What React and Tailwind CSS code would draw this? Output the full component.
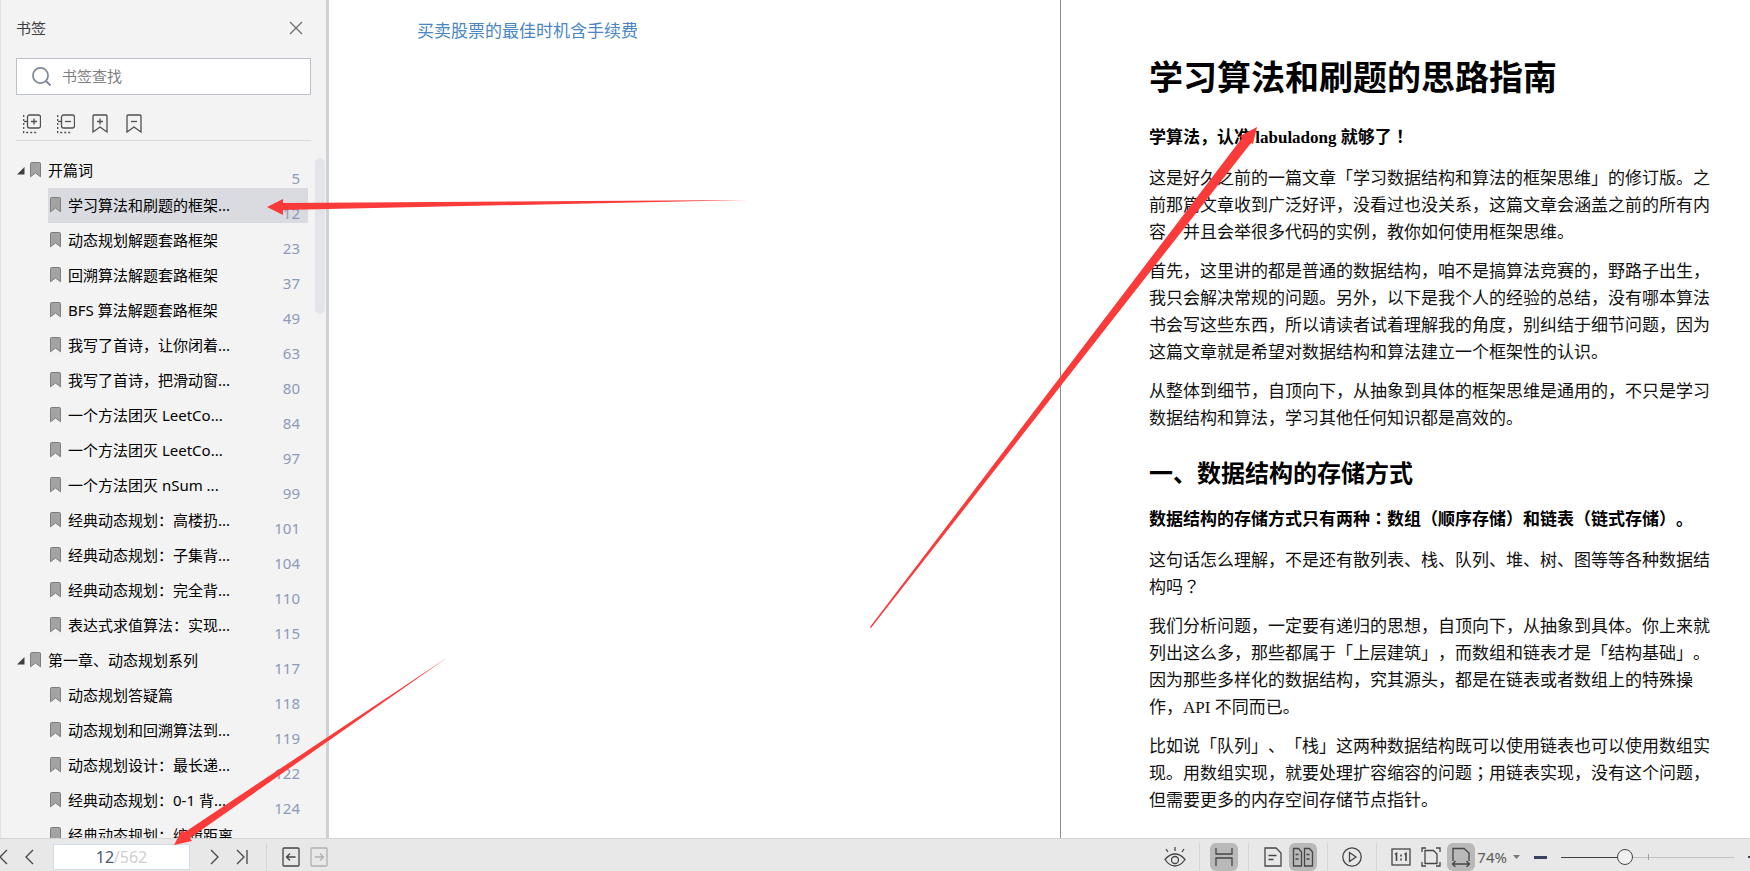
import { useState } from "react";

const bookmarks = [
  { title: "开篇词", page: 5, chapter: true },
  { title: "学习算法和刷题的框架...", page: 12 },
  { title: "动态规划解题套路框架", page: 23 },
  { title: "回溯算法解题套路框架", page: 37 },
  { title: "BFS 算法解题套路框架", page: 49 },
  { title: "我写了首诗，让你闭着...", page: 63 },
  { title: "我写了首诗，把滑动窗...", page: 80 },
  { title: "一个方法团灭 LeetCo...", page: 84 },
  { title: "一个方法团灭 LeetCo...", page: 97 },
  { title: "一个方法团灭 nSum ...", page: 99 },
  { title: "经典动态规划：高楼扔...", page: 101 },
  { title: "经典动态规划：子集背...", page: 104 },
  { title: "经典动态规划：完全背...", page: 110 },
  { title: "表达式求值算法：实现...", page: 115 },
  { title: "第一章、动态规划系列", page: 117, chapter: true },
  { title: "动态规划答疑篇", page: 118 },
  { title: "动态规划和回溯算法到...", page: 119 },
  { title: "动态规划设计：最长递...", page: 122 },
  { title: "经典动态规划：0-1 背...", page: 124 },
  { title: "经典动态规划：编辑距离", page: null },
];

function Icon({ w = 20, h = 20, children, className = "" }) {
  return (
    <svg
      width={w}
      height={h}
      viewBox={`0 0 ${w} ${h}`}
      fill="none"
      stroke="currentColor"
      strokeWidth="1.3"
      className={`shrink-0 ${className}`}
      aria-hidden="true"
    >
      {children}
    </svg>
  );
}

function BookmarkGlyph() {
  return (
    <svg width="11" height="16" viewBox="0 0 11 16" className="shrink-0" aria-hidden="true">
      <path d="M.5 1.5q0-1 1-1h8q1 0 1 1v13.3L5.5 11 .5 14.8z" fill="#a3a3a3" stroke="#7e7e7e" />
    </svg>
  );
}

function BookmarkRow({ item, selected, onSelect }) {
  return (
    <li className={item.chapter ? "pl-3.5" : "pl-[47px]"}>
      <button
        onClick={onSelect}
        className={`flex h-[35px] w-full items-center pr-2 pb-0.5 text-left ${selected ? "bg-[#d9dbe0]" : ""}`}
      >
        {item.chapter && (
          <svg width="10" height="8" viewBox="0 0 10 8" className="mt-0.5 mr-1 ml-px shrink-0" aria-hidden="true">
            <path d="M8.5 0v7.5H1z" fill="#404040" />
          </svg>
        )}
        <span className={item.chapter ? "mr-[7px]" : "mr-[7px] ml-0.5"}>
          <BookmarkGlyph />
        </span>
        <span className="flex-1 whitespace-nowrap text-[15px] leading-5 text-black">{item.title}</span>
        <span className="pt-4 text-[15px] leading-5 text-[#8d9ab8]">{item.page}</span>
      </button>
    </li>
  );
}

function Sidebar() {
  const [selected, setSelected] = useState(1);

  return (
    <aside className="flex w-[329px] shrink-0 flex-col border-r-3 border-l border-r-[#cfd0d5] border-l-[#e2e2e2] bg-[#f3f3f3]">
      <div className="flex h-[58px] shrink-0 items-center justify-between pr-[23px] pb-0.5 pl-[15px]">
        <h2 className="text-[15px] text-[#3c3c3c]">书签</h2>
        <button aria-label="关闭" className="text-[#6d6d6d]">
          <Icon w={14} h={14}>
            <path d="M1 1l12 12M13 1L1 13" />
          </Icon>
        </button>
      </div>
      <div className="shrink-0 px-[15px]">
        <label className="flex h-[37px] items-center border border-[#bcc0ca] bg-white pl-[15px]">
          <Icon className="text-[#7e889d]">
            <circle cx="8.5" cy="8.5" r="7.6" strokeWidth="1.7" />
            <path d="M14 14l4.5 4.5" strokeWidth="2" />
          </Icon>
          <input
            aria-label="书签查找"
            placeholder="书签查找"
            className="ml-2.5 min-w-0 flex-1 bg-transparent text-[15px] outline-none placeholder:text-[#7f7f7f]"
          />
        </label>
        <div className="flex h-[46px] items-center gap-4 border-b border-[#dadada] pt-3 pl-[7px] text-[#505050]">
          <button aria-label="展开">
            <Icon w={18} h={20}>
              <rect x="4.5" y="1" width="13" height="13" rx="2" />
              <path d="M11 4.5v6M8 7.5h6" />
              <path d="M.7 1v17.5H14" strokeDasharray="2 2" />
              <path d="M1 7.5h3.5" />
            </Icon>
          </button>
          <button aria-label="收起">
            <Icon w={18} h={20}>
              <rect x="4.5" y="1" width="13" height="13" rx="2" />
              <path d="M8 7.5h6" />
              <path d="M.7 1v17.5H14" strokeDasharray="2 2" />
              <path d="M1 7.5h3.5" />
            </Icon>
          </button>
          <button aria-label="添加书签">
            <Icon w={18} h={20}>
              <path d="M2 18V2q0-1 1-1h12q1 0 1 1v16l-7-5z" />
              <path d="M9 4.5v6M6 7.5h6" />
            </Icon>
          </button>
          <button aria-label="删除书签">
            <Icon w={18} h={20}>
              <path d="M2 18V2q0-1 1-1h12q1 0 1 1v16l-7-5z" />
              <path d="M6 7.5h6" />
            </Icon>
          </button>
        </div>
      </div>
      <div className="flex min-h-0 flex-1 overflow-hidden pt-3">
        <ul className="min-w-0 flex-1">
          {bookmarks.map((item, i) => (
            <BookmarkRow key={i} item={item} selected={i === selected} onSelect={() => setSelected(i)} />
          ))}
        </ul>
        <div className="mt-[5px] mr-px ml-[7px] h-[156px] w-2.5 rounded-full bg-[#e4e5e8]" />
      </div>
    </aside>
  );
}

// These marks sit in the middle of their square, as in the printed book
function Prose({ children }) {
  return children.split(/([：；！？])/).map((part, i) =>
    i % 2 ? (
      <span key={i} className="font-['Noto_Sans_CJK_JP',sans-serif] leading-none">
        {part}
      </span>
    ) : (
      part
    )
  );
}

function Paragraph({ children, bold }) {
  return (
    <p className={`text-[17px] leading-[27px] ${bold ? "mb-3.5 font-bold text-black" : "mb-3 text-[#111]"}`}>
      <Prose>{children}</Prose>
    </p>
  );
}

function Document() {
  return (
    <main className="flex min-w-0 flex-1 bg-white font-['Liberation_Serif','Noto_Sans_CJK_SC',serif] [text-spacing-trim:space-all]">
      <section className="w-[732px] shrink-0 border-r border-[#8c8c8c] pt-[18px] pl-[88px]">
        <a href="#fee" className="text-[17px] leading-[27px] text-[#4a86c5]">
          买卖股票的最佳时机含手续费
        </a>
      </section>
      <section className="min-w-0 flex-1 pt-[59px] pr-8 pl-[88px]">
        <div className="max-w-[564px]">
          <h1 className="mb-[25px] text-[34px] leading-10 font-bold text-black">学习算法和刷题的思路指南</h1>
          <Paragraph bold>学算法，认准 labuladong 就够了！</Paragraph>
          <Paragraph>
            这是好久之前的一篇文章「学习数据结构和算法的框架思维」的修订版。之前那篇文章收到广泛好评，没看过也没关系，这篇文章会涵盖之前的所有内容，并且会举很多代码的实例，教你如何使用框架思维。
          </Paragraph>
          <Paragraph>
            首先，这里讲的都是普通的数据结构，咱不是搞算法竞赛的，野路子出生，我只会解决常规的问题。另外，以下是我个人的经验的总结，没有哪本算法书会写这些东西，所以请读者试着理解我的角度，别纠结于细节问题，因为这篇文章就是希望对数据结构和算法建立一个框架性的认识。
          </Paragraph>
          <Paragraph>
            从整体到细节，自顶向下，从抽象到具体的框架思维是通用的，不只是学习数据结构和算法，学习其他任何知识都是高效的。
          </Paragraph>
          <h2 className="mt-[26px] mb-4 text-2xl leading-8 font-bold text-black">一、数据结构的存储方式</h2>
          <Paragraph bold>数据结构的存储方式只有两种：数组（顺序存储）和链表（链式存储）。</Paragraph>
          <Paragraph>这句话怎么理解，不是还有散列表、栈、队列、堆、树、图等等各种数据结构吗？</Paragraph>
          <Paragraph>
            我们分析问题，一定要有递归的思想，自顶向下，从抽象到具体。你上来就列出这么多，那些都属于「上层建筑」，而数组和链表才是「结构基础」。因为那些多样化的数据结构，究其源头，都是在链表或者数组上的特殊操作，API 不同而已。
          </Paragraph>
          <Paragraph>
            比如说「队列」、「栈」这两种数据结构既可以使用链表也可以使用数组实现。用数组实现，就要处理扩容缩容的问题；用链表实现，没有这个问题，但需要更多的内存空间存储节点指针。
          </Paragraph>
        </div>
      </section>
    </main>
  );
}

function ToolButton({ label, active, children }) {
  return (
    <button
      aria-label={label}
      className={`flex size-7 shrink-0 items-center justify-center rounded-md ${active ? "bg-[#b9b9b9]" : ""}`}
    >
      {children}
    </button>
  );
}

function Divider({ className = "" }) {
  return <span className={`h-7 w-px shrink-0 bg-[#d6d6d6] ${className}`} />;
}

function StatusBar() {
  const [zoom, setZoom] = useState(37);

  return (
    <footer className="flex h-[33px] shrink-0 items-center justify-between overflow-hidden border-t border-[#d5d5d5] bg-[#e8e8e8] pt-1 text-[#454545]">
      <div className="flex items-center">
        <button aria-label="第一页">
          <Icon w={10} h={16}>
            <path d="M7 1L0 8l7 7" />
          </Icon>
        </button>
        <button aria-label="上一页" className="ml-3.5">
          <Icon w={10} h={16}>
            <path d="M9 1L2 8l7 7" />
          </Icon>
        </button>
        <label className="ml-[19px] flex h-[26px] w-[137px] items-center justify-center border border-[#d3dbe8] bg-white text-base">
          <input aria-label="页码" defaultValue="12" className="w-[18px] text-[#4c5874] outline-none" />
          <span className="text-[#cfcfcf]">/562</span>
        </label>
        <button aria-label="下一页" className="ml-5">
          <Icon w={10} h={16}>
            <path d="M1 1l7 7-7 7" />
          </Icon>
        </button>
        <button aria-label="最后一页" className="ml-4">
          <Icon w={12} h={16}>
            <path d="M1 1l7 7-7 7M11 1v14" />
          </Icon>
        </button>
        <Divider className="ml-[18px]" />
        <button aria-label="后退" className="ml-[15px]">
          <Icon w={18} h={20}>
            <rect x="1" y="1" width="16" height="18" rx="1" />
            <path d="M13.5 10H5M8 6.5L4.5 10 8 13.5" />
          </Icon>
        </button>
        <button aria-label="前进" className="ml-2.5 text-[#b0b0b0]">
          <Icon w={18} h={20}>
            <rect x="1" y="1" width="16" height="18" rx="1" />
            <path d="M4.5 10H13M10 6.5l3.5 3.5-3.5 3.5" />
          </Icon>
        </button>
      </div>
      <div className="flex items-center">
        <ToolButton label="护眼模式">
          <Icon w={22} h={20}>
            <path d="M1 12.5Q5.5 7 11 7t10 5.5Q16.5 19 11 19T1 12.5z" />
            <circle cx="11" cy="13" r="3.5" />
            <path d="M11 0v4M2 2l2 3M20 2l-2 3" />
          </Icon>
        </ToolButton>
        <Divider className="mx-2.5" />
        <ToolButton label="连续阅读" active>
          <Icon>
            <path d="M2 1v6h16V1M2 19v-8h16v8" />
          </Icon>
        </ToolButton>
        <Divider className="mx-2.5" />
        <div className="flex gap-0.5">
          <ToolButton label="单页">
            <Icon w={18} h={20}>
              <path d="M1 1h11l5 5v13H1z" />
              <path d="M4.5 8.5h8M4.5 12.5h5" />
            </Icon>
          </ToolButton>
          <ToolButton label="双页" active>
            <Icon w={22} h={20}>
              <path d="M1.5 1.5h5L9.5 5v14h-8zM12.5 1.5h5L20.5 5v14h-8z" />
              <path d="M3.5 7.5h3M3.5 12h3M14.5 7.5h3M14.5 12h3" />
            </Icon>
          </ToolButton>
        </div>
        <Divider className="mx-2.5" />
        <ToolButton label="播放">
          <Icon>
            <circle cx="10" cy="10" r="9.2" />
            <path d="M7.5 5.5v9l6.5-4.5z" />
          </Icon>
        </ToolButton>
        <Divider className="mx-2.5" />
        <div className="flex gap-0.5">
          <ToolButton label="实际大小">
            <Icon>
              <rect x="1" y="2" width="18" height="16" />
              <path d="M4 7.5l1.5-1v7.5M13.5 7.5l1.5-1v7.5M10 7.5v2M10 11.5v2" strokeWidth="1.6" />
            </Icon>
          </ToolButton>
          <ToolButton label="适合页面">
            <Icon>
              <path d="M4 3.5h8.5L16 7v9.5H4z" />
              <path d="M1 5V1h4M15 1h4v4M1 15v4h4M15 19h4v-4" />
            </Icon>
          </ToolButton>
          <ToolButton label="适合宽度" active>
            <Icon>
              <path d="M2 14V1.5h11L18 6v8M1.5 17h17M4.5 14L1.5 17l3 3M15.5 14l3 3-3 3" />
            </Icon>
          </ToolButton>
        </div>
        <button className="flex items-center gap-1.5 pl-0.5 text-[15px] text-[#5a5a5a]">
          74%
          <svg width="7" height="4" viewBox="0 0 7 4" aria-hidden="true">
            <path d="M0 0h7L3.5 4z" fill="#777" />
          </svg>
        </button>
        <button aria-label="缩小" className="ml-3.5 flex h-5 w-[13px] items-center">
          <span className="h-[3px] w-full bg-[#37425f]" />
        </button>
        <div className="relative ml-3.5 flex h-5 w-[173px] items-center">
          <span className="h-px bg-[#404040]" style={{ width: `${zoom}%` }} />
          <span className="h-px flex-1 bg-[#c2c2c2]" />
          <span className="absolute left-1/2 h-1.5 w-px bg-[#a0a0a0]" />
          <span
            className="absolute size-4 -translate-x-1/2 rounded-full border border-[#454545] bg-[#f0f0f0]"
            style={{ left: `${zoom}%` }}
          />
          <input
            type="range"
            aria-label="缩放"
            value={zoom}
            onChange={(e) => setZoom(Number(e.target.value))}
            className="absolute inset-0 w-full opacity-0"
          />
        </div>
        <button aria-label="放大" className="ml-3.5 flex h-5 w-0.5 items-center">
          <span className="h-0.5 w-full bg-[#37425f]" />
        </button>
      </div>
    </footer>
  );
}

// Hand-placed red pointers over the reader
function Annotations() {
  return (
    <svg
      width="1750"
      height="871"
      viewBox="0 0 1750 871"
      fill="#fb3a3a"
      className="pointer-events-none absolute top-0 left-0"
      aria-hidden="true"
    >
      <path d="M267 207l16-8v4l465-3-465 10v5z" />
      <path d="M1257 127L1253 144L1251 143L871 628L870 627L1242 138L1240 136z" />
      <path d="M174 845L182 830L185 832L448 657L190 838L192 841z" />
    </svg>
  );
}

export default function App() {
  return (
    <div className="relative flex h-screen flex-col overflow-hidden bg-white font-['Noto_Sans','Noto_Sans_CJK_SC',sans-serif]">
      <div className="flex min-h-0 flex-1">
        <Sidebar />
        <Document />
      </div>
      <StatusBar />
      <Annotations />
    </div>
  );
}
